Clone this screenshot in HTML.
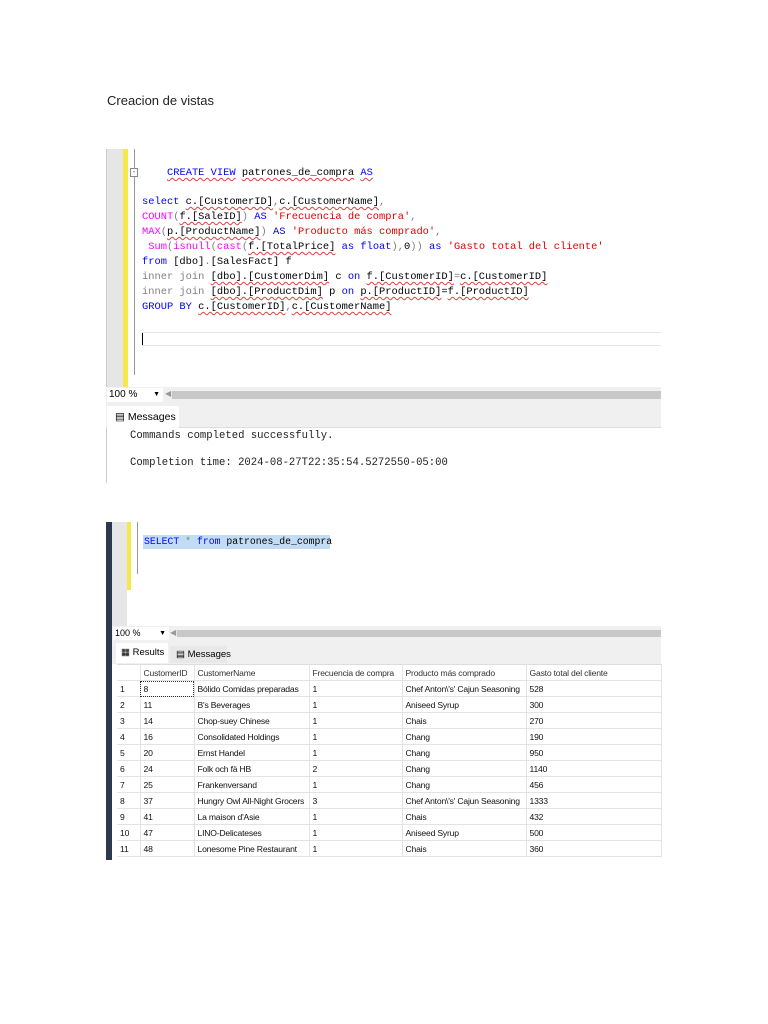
<!DOCTYPE html>
<html><head><meta charset="utf-8"><style>
*{margin:0;padding:0;box-sizing:border-box}
body{width:768px;height:1024px;background:#fff;position:relative;overflow:hidden;font-family:"Liberation Sans",sans-serif}
.a{position:absolute}
.code{font-family:"Liberation Mono",monospace;font-size:10.4px;white-space:pre;line-height:15px}
.k{color:#0000ff}.m{color:#ff00ff}.s{color:#e00000}.g{color:#808080}.t{color:#000}
.u{text-decoration:underline wavy #e04040;text-decoration-thickness:1px;text-underline-offset:2px}
.msg{font-family:"Liberation Mono",monospace;font-size:10.6px;color:#222;white-space:pre}
table{border-collapse:collapse;font-size:8.6px;letter-spacing:-0.2px;color:#111;font-family:"Liberation Sans",sans-serif;table-layout:fixed}
td{border-bottom:1px solid #e3e3e3;border-right:1px solid #e3e3e3;height:16px;padding:0 3px;white-space:nowrap;overflow:hidden}
</style></head><body>
<div class="a" style="left:107px;top:93px;font-size:13px;color:#222">Creacion de vistas</div>

<!-- shot 1 -->
<div class="a" style="left:106px;top:149px;width:555px;height:238px;background:#fff"></div>
<div class="a" style="left:106px;top:149px;width:17px;height:238px;background:#e6e6e6;border-left:1px solid #ccc"></div>
<div class="a" style="left:123px;top:149px;width:5px;height:238px;background:#f5e84a"></div>
<div class="a" style="left:134px;top:149px;width:1px;height:226px;background:#999"></div>
<div class="a" style="left:130px;top:168px;width:8px;height:9px;border:1px solid #888;background:#fff;font-size:8px;line-height:6px;text-align:center;color:#555">-</div>
<div class="a" style="left:142px;top:332px;width:519px;height:14px;border-top:1px solid #e5e5e5;border-bottom:1px solid #e5e5e5"></div>
<div class="a" style="left:142px;top:333px;width:1px;height:12px;background:#000"></div>
<div class="a code" style="left:167px;top:166px"><span class="k u">CREATE VIEW</span> <span class="u">patrones_de_compra</span> <span class="k u">AS</span></div>
<div class="a code" style="left:142px;top:195px"><span class="k">select</span> <span class="u">c.[CustomerID]</span><span class="g">,</span><span class="u">c.[CustomerName]</span><span class="g">,</span>
<span class="m">COUNT</span><span class="g">(</span><span class="u">f.[SaleID]</span><span class="g">)</span> <span class="k">AS</span> <span class="s">'Frecuencia de compra'</span><span class="g">,</span>
<span class="m">MAX</span><span class="g">(</span><span class="u">p.[ProductName]</span><span class="g">)</span> <span class="k">AS</span> <span class="s">'Producto más comprado'</span><span class="g">,</span>
 <span class="m">Sum</span><span class="g">(</span><span class="m">isnull</span><span class="g">(</span><span class="m">cast</span><span class="g">(</span><span class="u">f.[TotalPrice]</span> <span class="k">as float</span><span class="g">),</span>0<span class="g">))</span> <span class="k">as</span> <span class="s">'Gasto total del cliente'</span>
<span class="k">from</span> [dbo]<span class="g">.</span>[SalesFact] f
<span class="g">inner join</span> <span class="u">[dbo].[CustomerDim]</span> c <span class="k">on</span> <span class="u">f.[CustomerID]</span><span class="g">=</span><span class="u">c.[CustomerID]</span>
<span class="g">inner join</span> <span class="u">[dbo].[ProductDim]</span> p <span class="k">on</span> <span class="u">p.[ProductID]</span>=<span class="u">f.[ProductID]</span>
<span class="k">GROUP BY</span> <span class="u">c.[CustomerID]</span><span class="g">,</span><span class="u">c.[CustomerName]</span></div>
<div class="a" style="left:106px;top:387px;width:555px;height:16px;background:#f0f0f0"></div>
<div class="a" style="left:107px;top:388px;width:56px;height:14px;background:#fff;font-size:10px;line-height:14px;padding-left:2px">100 %<span style="position:absolute;right:3px;font-size:7px">▼</span></div>
<div class="a" style="left:165px;top:389px;font-size:8px;color:#999">◀</div>
<div class="a" style="left:172px;top:391px;width:489px;height:8px;background:#c8c8c8"></div>
<div class="a" style="left:106px;top:403px;width:555px;height:80px;background:#fff;border-left:1px solid #ccc"></div>
<div class="a" style="left:106px;top:403px;width:555px;height:25px;background:#f0f0f0;border-bottom:1px solid #ddd"></div>
<div class="a" style="left:107px;top:406px;width:72px;height:22px;background:#fff;font-size:10.5px;line-height:22px;padding-left:8px;white-space:nowrap">▤ Messages</div>
<div class="a msg" style="left:130px;top:430px">Commands completed successfully.</div>
<div class="a msg" style="left:130px;top:457px">Completion time: 2024-08-27T22:35:54.5272550-05:00</div>

<!-- shot 2 -->
<div class="a" style="left:106px;top:522px;width:6px;height:338px;background:#2d3a4e"></div>
<div class="a" style="left:112px;top:522px;width:15px;height:105px;background:#e6e6e6"></div>
<div class="a" style="left:127px;top:522px;width:4px;height:68px;background:#f5e84a"></div>
<div class="a" style="left:137px;top:522px;width:1px;height:52px;background:#999"></div>
<div class="a" style="left:143px;top:535px;width:187px;height:14px;background:#c2dcf5"></div>
<div class="a code" style="left:144px;top:534px;font-size:9.8px"><span class="k">SELECT</span> <span class="g">*</span> <span class="k">from</span> patrones_de_compra</div>
<div class="a" style="left:112px;top:626px;width:549px;height:15px;background:#f0f0f0"></div>
<div class="a" style="left:113px;top:627px;width:56px;height:13px;background:#fff;font-size:9px;line-height:13px;padding-left:2px">100 %<span style="position:absolute;right:3px;font-size:7px">▼</span></div>
<div class="a" style="left:170px;top:628px;font-size:8px;color:#999">◀</div>
<div class="a" style="left:177px;top:630px;width:484px;height:7px;background:#c8c8c8"></div>
<div class="a" style="left:112px;top:641px;width:549px;height:23px;background:#f0f0f0"></div>
<div class="a" style="left:116px;top:643px;width:52px;height:20px;background:#fff;font-size:9.5px;line-height:20px;padding-left:5px;white-space:nowrap">▦ Results</div>
<div class="a" style="left:170px;top:646px;width:57px;height:17px;background:#e8e8e8;font-size:9.5px;line-height:17px;padding-left:6px;white-space:nowrap">▤ Messages</div>
<div class="a" style="left:112px;top:664px;width:549px;height:196px;background:#fff"></div>
<table class="a" style="left:117px;top:664px;width:544px;border-top:1px solid #ddd">
<colgroup><col style="width:23px"><col style="width:54px"><col style="width:115px"><col style="width:93px"><col style="width:124px"><col style="width:135px"></colgroup>
<tr style="color:#333"><td></td><td>CustomerID</td><td>CustomerName</td><td>Frecuencia de compra</td><td>Producto más comprado</td><td>Gasto total del cliente</td></tr>
<tr><td>1</td><td style="outline:1px dotted #333;outline-offset:-1px">8</td><td>Bólido Comidas preparadas</td><td>1</td><td>Chef Anton\'s' Cajun Seasoning</td><td>528</td></tr>
<tr><td>2</td><td>11</td><td>B's Beverages</td><td>1</td><td>Aniseed Syrup</td><td>300</td></tr>
<tr><td>3</td><td>14</td><td>Chop-suey Chinese</td><td>1</td><td>Chais</td><td>270</td></tr>
<tr><td>4</td><td>16</td><td>Consolidated Holdings</td><td>1</td><td>Chang</td><td>190</td></tr>
<tr><td>5</td><td>20</td><td>Ernst Handel</td><td>1</td><td>Chang</td><td>950</td></tr>
<tr><td>6</td><td>24</td><td>Folk och fä HB</td><td>2</td><td>Chang</td><td>1140</td></tr>
<tr><td>7</td><td>25</td><td>Frankenversand</td><td>1</td><td>Chang</td><td>456</td></tr>
<tr><td>8</td><td>37</td><td>Hungry Owl All-Night Grocers</td><td>3</td><td>Chef Anton\'s' Cajun Seasoning</td><td>1333</td></tr>
<tr><td>9</td><td>41</td><td>La maison d'Asie</td><td>1</td><td>Chais</td><td>432</td></tr>
<tr><td>10</td><td>47</td><td>LINO-Delicateses</td><td>1</td><td>Aniseed Syrup</td><td>500</td></tr>
<tr><td>11</td><td>48</td><td>Lonesome Pine Restaurant</td><td>1</td><td>Chais</td><td>360</td></tr>
</table>
</body></html>
